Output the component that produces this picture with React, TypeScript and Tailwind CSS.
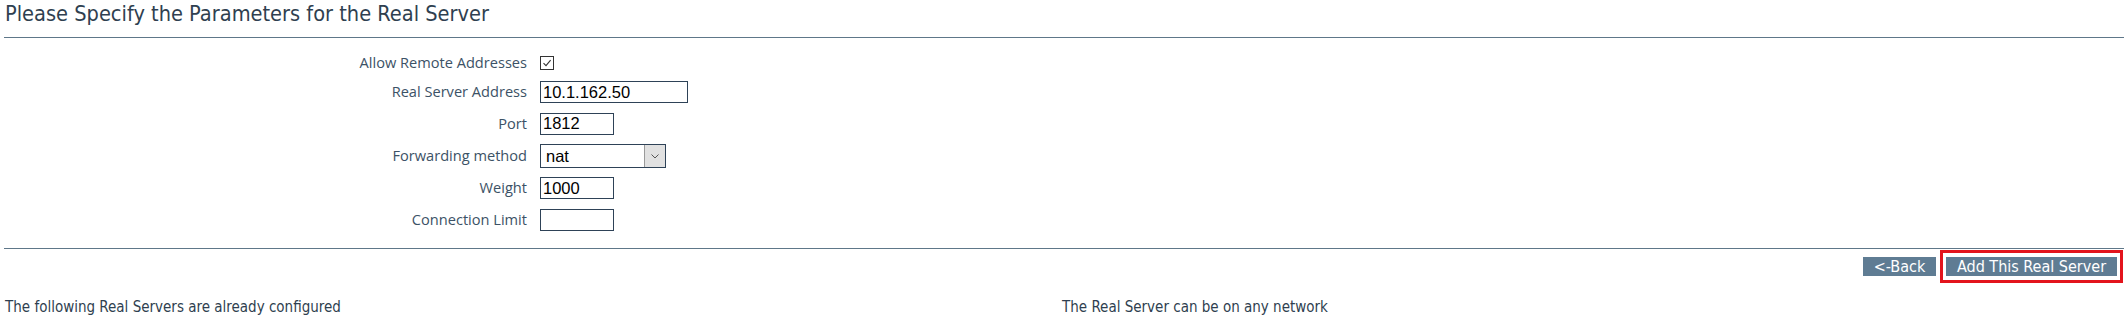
import React from 'react';

const labelFont = { fontFamily: '"Open Sans", "DejaVu Sans", sans-serif' };
const narrowFont = { fontFamily: '"Liberation Sans Narrow", "DejaVu Sans Condensed", sans-serif' };
const boxFont = { fontFamily: '"Liberation Sans", Arial, sans-serif' };
const buttonFont = { fontFamily: '"DejaVu Sans Condensed", "Liberation Sans", sans-serif' };

function Row({ label, h, children }: { label: string; h: string; children: React.ReactNode }) {
  return (
    <div className={`flex items-center ${h}`}>
      <div className="w-[527px] text-right text-[14.6px] text-[#3c5266]" style={labelFont}>
        {label}
      </div>
      <div className="ml-[13px] flex items-center">{children}</div>
    </div>
  );
}

function TextBox({ value, width }: { value?: string; width: string }) {
  return (
    <div
      className={`flex h-[22px] ${width} items-center border border-[#2e4257] bg-white pl-[2px] text-[16.5px] text-black`}
      style={boxFont}
    >
      {value}
    </div>
  );
}

export default function App() {
  return (
    <div className="w-[2128px] h-[329px] bg-white">
      <div className="pl-[5px] h-[37px] text-[21.6px] leading-[27px] text-[#2f3f50]" style={narrowFont}>
        Please Specify the Parameters for the Real Server
      </div>
      <div className="mx-[4px] h-px bg-[#5e7789]" />
      <div className="pt-[10px]">
        <Row label="Allow Remote Addresses" h="h-[29px]">
          <div className="flex h-[14px] w-[14px] items-center justify-center border border-[#333] bg-white">
            <svg width="10" height="10" viewBox="0 0 10 10" fill="none">
              <path d="M1.5 5.2 L4 7.6 L8.6 2.2" stroke="#333" strokeWidth="1.1" />
            </svg>
          </div>
        </Row>
        <Row label="Real Server Address" h="h-[30px]">
          <TextBox value="10.1.162.50" width="w-[148px]" />
        </Row>
        <Row label="Port" h="h-[33px]">
          <TextBox value="1812" width="w-[74px]" />
        </Row>
        <Row label="Forwarding method" h="h-[32px]">
          <div className="flex h-[24px] w-[126px] items-stretch border border-[#2e4257] bg-white text-[16.5px] text-black" style={boxFont}>
            <div className="flex flex-1 items-center pl-[5px]">nat</div>
            <div className="flex w-[21px] items-center justify-center border-l border-[#9a9a9a] bg-[#e1e1e1]">
              <svg width="8" height="5" viewBox="0 0 8 5" fill="none">
                <path d="M0.5 0.5 L4 4 L7.5 0.5" stroke="#555" strokeWidth="1" />
              </svg>
            </div>
          </div>
        </Row>
        <Row label="Weight" h="h-[32px]">
          <TextBox value="1000" width="w-[74px]" />
        </Row>
        <Row label="Connection Limit" h="h-[32px]">
          <TextBox width="w-[74px]" />
        </Row>
      </div>
      <div className="mx-[4px] mt-[12px] h-px bg-[#5e7789]" />
      <div className="flex justify-end pr-[5px] pt-[1px]">
        <div className="flex items-center">
          <button className="h-[19px] w-[73px] bg-[#5f7c93] text-[16px] leading-[19px] text-white" style={buttonFont}>
            &lt;-Back
          </button>
          <div className="ml-[4px] border-[3px] border-[#e3141c] px-[3px] py-[4px]">
            <button className="block h-[19px] w-[171px] bg-[#5f7c93] text-[16px] leading-[19px] text-white" style={buttonFont}>
              Add This Real Server
            </button>
          </div>
        </div>
      </div>
      <div className="mt-[13px] flex text-[15px] text-[#2f3f50]" style={narrowFont}>
        <div className="w-[1062px] pl-[5px]">The following Real Servers are already configured</div>
        <div>The Real Server can be on any network</div>
      </div>
    </div>
  );
}
